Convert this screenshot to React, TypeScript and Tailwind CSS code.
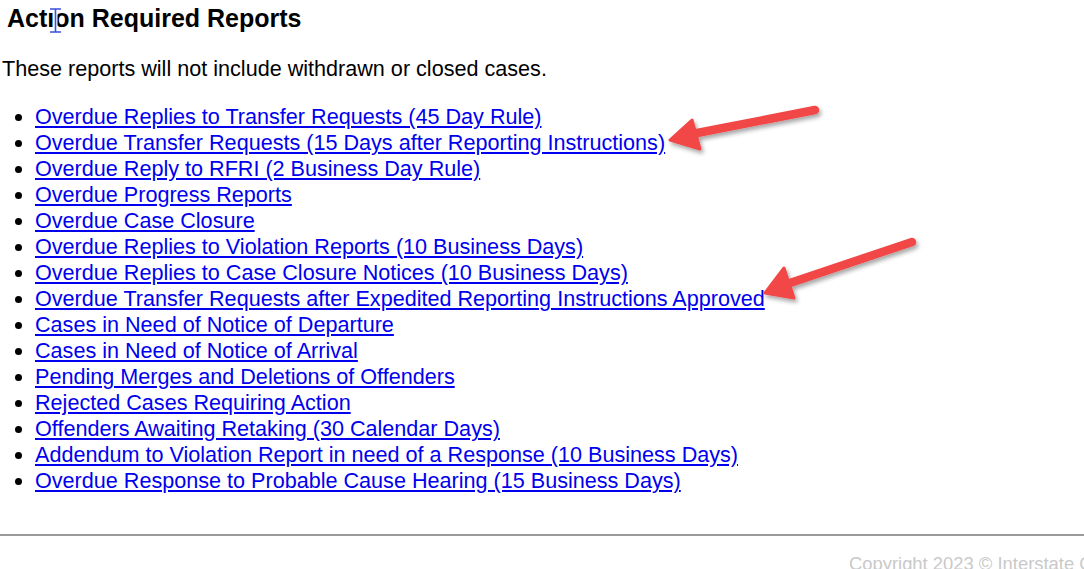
import React from 'react';

const reports = [
  'Overdue Replies to Transfer Requests (45 Day Rule)',
  'Overdue Transfer Requests (15 Days after Reporting Instructions)',
  'Overdue Reply to RFRI (2 Business Day Rule)',
  'Overdue Progress Reports',
  'Overdue Case Closure',
  'Overdue Replies to Violation Reports (10 Business Days)',
  'Overdue Replies to Case Closure Notices (10 Business Days)',
  'Overdue Transfer Requests after Expedited Reporting Instructions Approved',
  'Cases in Need of Notice of Departure',
  'Cases in Need of Notice of Arrival',
  'Pending Merges and Deletions of Offenders',
  'Rejected Cases Requiring Action',
  'Offenders Awaiting Retaking (30 Calendar Days)',
  'Addendum to Violation Report in need of a Response (10 Business Days)',
  'Overdue Response to Probable Cause Hearing (15 Business Days)',
];

// annotation arrows drawn over the page
const Arrows = () => (
  <svg className="pointer-events-none absolute left-0 top-0" width="1084" height="569">
    <defs>
      <filter id="shadow" x="-20%" y="-20%" width="140%" height="140%">
        <feDropShadow dx="2" dy="3" stdDeviation="2" floodColor="#000" floodOpacity="0.35" />
      </filter>
    </defs>
    <g filter="url(#shadow)" fill="#f24646" stroke="#f24646" strokeLinecap="round" strokeLinejoin="round">
      <line x1="815" y1="110" x2="692" y2="134" strokeWidth="8.5" />
      <polygon points="670,140 692,120 700,149" strokeWidth="3" />
      <line x1="912" y1="242" x2="784" y2="285" strokeWidth="8.5" />
      <polygon points="765,293 784,268 794,298" strokeWidth="3" />
    </g>
  </svg>
);

// text cursor (I-beam) over the heading
const Cursor = () => (
  <svg className="pointer-events-none absolute left-[47px] top-[6px]" width="17" height="29" viewBox="0 0 17 29">
    <g stroke="#fff" strokeWidth="4" fill="none" strokeLinecap="square">
      <path d="M3 3h11M8.5 3v23M3 26h11" />
    </g>
    <g stroke="#3b4fd9" strokeWidth="1.6" fill="none">
      <path d="M3 3h11M8.5 3v23M3 26h11" />
    </g>
  </svg>
);

export default function App() {
  return (
    <div className="relative h-[569px] w-full overflow-hidden bg-white font-['Liberation_Sans',Arial,sans-serif] text-black">
      <div className="pl-[2px]">
        <h3 className="mt-[4px] pl-[5px] text-[25px] font-bold leading-[29px]">Action Required Reports</h3>
        <p className="mt-[23px] text-[21.6px] leading-[25px]">
          These reports will not include withdrawn or closed cases.
        </p>
        <ul className="mt-[23px] list-disc pl-[33px] text-[21.6px] leading-[26px]">
          {reports.map((r) => (
            <li key={r}>
              <a href="#" className="text-[#0000ee] underline">
                {r}
              </a>
            </li>
          ))}
        </ul>
      </div>

      <div className="mt-[40px] h-[2px] w-full bg-[#9a9a9a]" />

      <footer className="mt-[17px] pl-[849px] whitespace-nowrap text-[18.4px] leading-[22px] text-[#c9c9c9]">
        Copyright 2023 © Interstate Commission for Adult Offender Supervision
      </footer>

      <Cursor />
      <Arrows />
    </div>
  );
}
